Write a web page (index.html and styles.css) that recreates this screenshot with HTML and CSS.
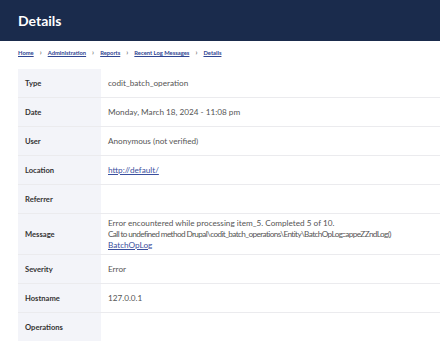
FILE: index.html
```html
<!DOCTYPE html>
<html>
<head>
    <meta charset="utf-8">
    <title>Details</title>
    <link rel="stylesheet" href="styles.css">
</head>
<body>
    <div class="page_head">
        <h1>Details</h1>
    </div>
    <ol class="crumbs">
        <li><a href="#">Home</a></li>
        <li><a href="#">Administration</a></li>
        <li><a href="#">Reports</a></li>
        <li><a href="#">Recent Log Messages</a></li>
        <li><a href="#">Details</a></li>
    </ol>
    <table class="log_table">
        <tr><th>Type</th><td>codit_batch_operation</td></tr>
        <tr><th>Date</th><td>Monday, March 18, 2024 - 11:08 pm</td></tr>
        <tr><th>User</th><td>Anonymous (not verified)</td></tr>
        <tr><th>Location</th><td><a href="#">http://default/</a></td></tr>
        <tr><th>Referrer</th><td></td></tr>
        <tr><th>Message</th><td>Error encountered while processing item_5. Completed 5 of 10.<br><span class="long_line">Call to undefined method Drupal\codit_batch_operations\Entity\BatchOpLog::appeZZndLog()</span><br><a href="#">BatchOpLog</a></td></tr>
        <tr><th>Severity</th><td>Error</td></tr>
        <tr><th>Hostname</th><td>127.0.0.1</td></tr>
        <tr><th>Operations</th><td></td></tr>
    </table>
</body>
</html>
```

FILE: styles.css
```css
* {
    margin: 0;
    padding: 0;
}

body {
    font-family: Lato, "Noto Sans", sans-serif;
    background-color: white;
    color: #222;
    overflow: hidden;
}

.page_head {
    height: 41px;
    background-color: #1a2b4c;
    display: flex;
    align-items: center;
    padding-left: 18px;
}

.page_head h1 {
    color: white;
    font-size: 14px;
    font-weight: bold;
}

.crumbs {
    list-style-type: none;
    display: flex;
    align-items: center;
    height: 12px;
    margin: 5px 0 11px 18px;
    font-size: 5.8px;
    font-weight: bold;
}

.crumbs li+li::before {
    content: "\203A";
    color: #777;
    font-size: 7px;
    margin: 0 6px;
}

.crumbs a {
    color: #2f4592;
}

.log_table {
    margin-left: 18px;
    width: calc(100% - 18px);
    border-collapse: collapse;
    font-size: 8.2px;
    line-height: 11px;
}

.log_table tr {
    border-bottom: 1px solid #ebebee;
}

.log_table tr:last-child {
    border-bottom: none;
}

.log_table th {
    width: 69px;
    min-width: 69px;
    height: 21px;
    padding: 3.5px 7px;
    text-align: left;
    font-weight: bold;
    font-size: 7.6px;
    color: #333;
    background-color: #f3f4f9;
}

.log_table td {
    padding: 3.5px 7px;
    color: #555;
    vertical-align: middle;
    white-space: nowrap;
}

.long_line {
    letter-spacing: -0.6px;
}

.log_table a {
    color: #3a4f9e;
}
```
